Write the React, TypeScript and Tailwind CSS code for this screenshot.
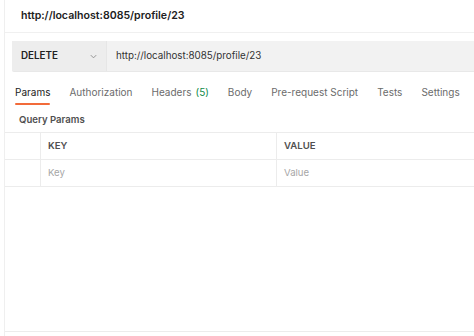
import React from "react";

export default function App() {
  const tabs = [
    { label: "Params", active: true },
    { label: "Authorization" },
    { label: "Headers", badge: "(5)" },
    { label: "Body" },
    { label: "Pre-request Script" },
    { label: "Tests" },
    { label: "Settings" },
  ];
  return (
    <div
      className="w-[474px] h-[336px] bg-white flex overflow-hidden text-[10px]"
      style={{ fontFamily: "Inter, 'Noto Sans', sans-serif" }}
    >
      <div className="w-[4px] shrink-0" />
      <div className="flex-1 flex flex-col border-l border-[#efefef] min-w-0">
        <div className="h-[33px] shrink-0 flex items-center pl-[16px] border-b border-[#f0f0f0] font-semibold text-[#212121] text-[10.6px]">
          http://localhost:8085/profile/23
        </div>
        <div className="mt-[8px] ml-[7px] h-[31px] flex bg-[#f2f2f2] rounded-l-[2px] border-b border-[#e8e8e8]">
          <div className="w-[95px] flex items-center justify-between pl-[9px] pr-[8px] bg-[#ededed] border-r border-[#e6e6e6]">
            <span className="font-semibold text-[#212121] text-[9.8px]">DELETE</span>
            <svg width="9" height="9" viewBox="0 0 10 10" fill="none">
              <path d="M2 3.5 L5 6.5 L8 3.5" stroke="#8a8a8a" strokeWidth="1" />
            </svg>
          </div>
          <div className="flex items-center pl-[9px] text-[#333] text-[9.8px]">http://localhost:8085/profile/23</div>
        </div>
        <div className="mt-[8px] h-[25px] flex pl-[10px] gap-[19px] text-[#6b6b6b]">
          {tabs.map((t) => (
            <div key={t.label} className={"relative flex items-center whitespace-nowrap " + (t.active ? "text-[#212121]" : "")}>
              {t.label}
              {t.badge && <span className="ml-[4px] text-[#0f8a4a]">{t.badge}</span>}
              {t.active && <div className="absolute left-0 right-0 bottom-0 h-[2px] bg-[#f26b3a] rounded-full" />}
            </div>
          ))}
        </div>
        <div className="h-[27px] pt-[3px] flex items-center pl-[14px] font-semibold text-[#505050] text-[9.6px]">Query Params</div>
        <div className="border-t border-b border-[#ececec] text-[9.6px]">
          <div className="h-[27px] flex border-b border-[#ececec]">
            <div className="w-[36px] border-r border-[#ececec]" />
            <div className="w-[236px] border-r border-[#ececec] flex items-center pl-[7px] font-semibold text-[#505050]">KEY</div>
            <div className="flex-1 flex items-center pl-[7px] font-semibold text-[#505050]">VALUE</div>
          </div>
          <div className="h-[26px] flex">
            <div className="w-[36px] border-r border-[#ececec]" />
            <div className="w-[236px] border-r border-[#ececec] flex items-center pl-[7px] text-[#a6a6a6]">Key</div>
            <div className="flex-1 flex items-center pl-[7px] text-[#a6a6a6]">Value</div>
          </div>
        </div>
        <div className="flex-1" />
        <div className="h-[5px] border-t border-[#ececec]" />
      </div>
    </div>
  );
}
